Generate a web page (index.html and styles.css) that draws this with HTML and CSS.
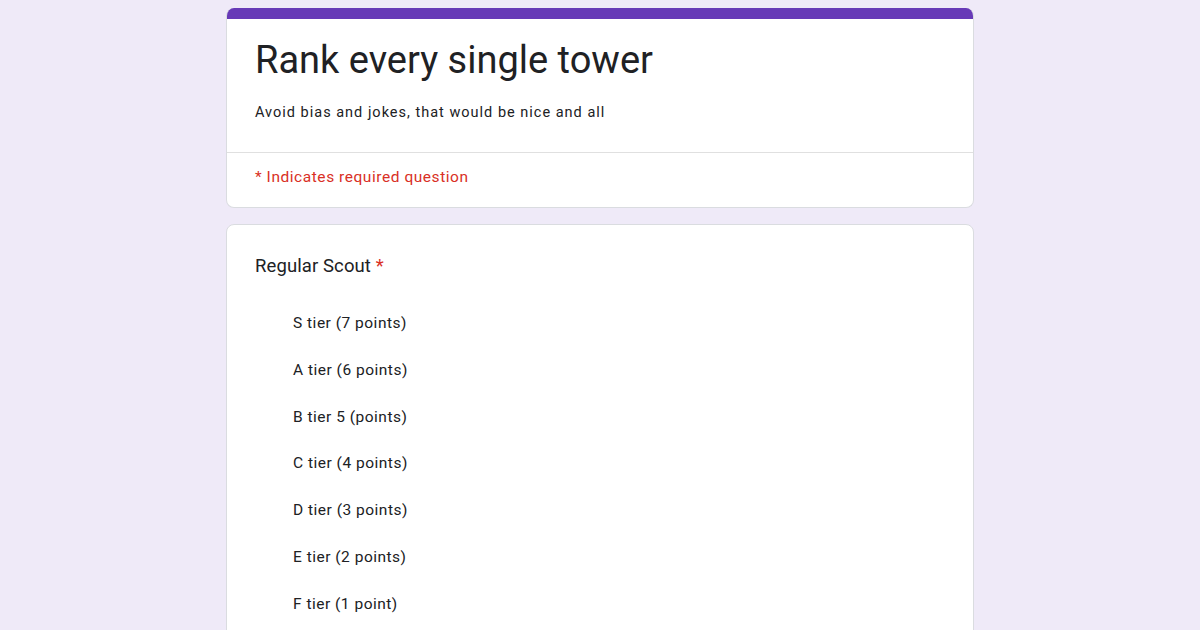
FILE: index.html
```html
<!DOCTYPE html>
<html>
<head>
<meta charset="utf-8">
<link rel="stylesheet" href="styles.css">
</head>
<body>
<div class="page">
  <div class="card header-card">
    <div class="accent"></div>
    <div class="header-main">
      <h1 class="title">Rank every single tower</h1>
      <p class="desc">Avoid bias and jokes, that would be nice and all</p>
    </div>
    <div class="required-note">* Indicates required question</div>
  </div>
  <div class="card question-card">
    <div class="question-title">Regular Scout <span class="star">*</span></div>
    <ul class="options">
      <li class="option">S tier (7 points)</li>
      <li class="option">A tier (6 points)</li>
      <li class="option">B tier 5 (points)</li>
      <li class="option">C tier (4 points)</li>
      <li class="option">D tier (3 points)</li>
      <li class="option">E tier (2 points)</li>
      <li class="option">F tier (1 point)</li>
    </ul>
  </div>
</div>
</body>
</html>
```
FILE: styles.css
```css
html, body {
  margin: 0;
  padding: 0;
  background: #efeaf8;
  font-family: Roboto, "Liberation Sans", sans-serif;
  color: #202124;
  overflow: hidden;
}
.page {
  width: 748px;
  margin: 8px auto 0;
  display: flex;
  flex-direction: column;
  gap: 16px;
}
.card {
  background: #fff;
  border: 1px solid #dadce0;
  border-radius: 8px;
  overflow: hidden;
}
.header-card {
  border-top: none;
}
.accent {
  height: 11px;
  background: #673ab7;
}
.header-main {
  padding: 17px 28px 29px;
  border-bottom: 1px solid #e0e0e0;
}
.title {
  margin: 0;
  font-size: 38px;
  line-height: 48px;
  font-weight: 400;
  color: #202124;
}
.desc {
  margin: 19px 0 0;
  font-size: 14.5px;
  line-height: 20px;
  letter-spacing: 1px;
  color: #202124;
}
.required-note {
  padding: 14px 28px 20px;
  font-size: 15.5px;
  line-height: 20px;
  letter-spacing: 0.55px;
  color: #d93025;
}
.question-card {
  padding: 29px 28px 0;
}
.question-title {
  font-size: 18.5px;
  line-height: 24px;
  letter-spacing: 0.1px;
  color: #202124;
}
.star {
  color: #d93025;
}
.options {
  list-style: none;
  margin: 35px 0 0;
  padding: 0 0 0 38px;
}
.option {
  height: 46.8px;
  font-size: 15.5px;
  line-height: 20px;
  letter-spacing: 0.5px;
  color: #202124;
}
```
